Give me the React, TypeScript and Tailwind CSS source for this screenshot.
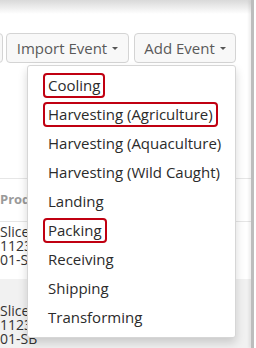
import React from 'react';

const EVENTS = [
  { label: 'Cooling', marked: true },
  { label: 'Harvesting (Agriculture)', marked: true },
  { label: 'Harvesting (Aquaculture)', marked: false },
  { label: 'Harvesting (Wild Caught)', marked: false },
  { label: 'Landing', marked: false },
  { label: 'Packing', marked: true },
  { label: 'Receiving', marked: false },
  { label: 'Shipping', marked: false },
  { label: 'Transforming', marked: false },
];

function Caret() {
  return (
    <span className="inline-block w-0 h-0 ml-[5px] border-x-[3px] border-x-transparent border-t-[3px] border-t-[#555] align-middle" />
  );
}

function ToolButton({ label, width }: { label: string; width: string }) {
  return (
    <div className={`${width} h-[30px] shrink-0 flex items-center justify-center rounded-[4px] border border-[#d4d4d4] bg-[#f8f8f8] text-[15px] text-[#5a5a5a] whitespace-nowrap`}>
      {label}
      <Caret />
    </div>
  );
}

export default function App() {
  return (
    <div
      className="relative w-[256px] h-[348px] overflow-hidden bg-white flex"
      style={{ fontFamily: '"Open Sans", "Noto Sans", sans-serif' }}
    >
      {/* page content */}
      <div className="w-[251px] h-full flex flex-col bg-white">
        <div className="h-[14px] bg-gradient-to-b from-[#d9d9d9] to-white shrink-0" />

        {/* toolbar */}
        <div className="mt-[19px] flex">
          <div className="w-[13px] -ml-[10px] shrink-0 h-[30px] rounded-[4px] border border-[#d4d4d4] bg-[#f8f8f8]" />
          <div className="ml-[3px]">
            <ToolButton label="Import Event" width="w-[123px]" />
          </div>
          <div className="ml-[5px]">
            <ToolButton label="Add Event" width="w-[102px]" />
          </div>
        </div>

        {/* table behind the menu */}
        <div className="mt-[115px] border-t border-[#e6e6e6]" />
        <div className="h-[43px] flex items-center text-[13px] font-bold text-[#9a9a9a] border-b border-[#e6e6e6] whitespace-nowrap">
          Product
        </div>
        <div className="h-[57px] pt-[3px] text-[14px] leading-[14px] text-[#333] whitespace-nowrap">
          <div>Sliced</div>
          <div>1123-</div>
          <div>01-SB</div>
        </div>
        <div className="flex-1 bg-[#f1f1f1] pt-[25px] text-[14px] leading-[14px] text-[#333] whitespace-nowrap">
          <div>Sliced</div>
          <div>1123-</div>
          <div>01-SB</div>
        </div>
      </div>

      {/* window edge */}
      <div className="w-[3px] h-full bg-[#bdbdbd] shadow-[-2px_0_3px_rgba(0,0,0,0.08)]" />
      <div className="flex-1 bg-white" />

      {/* dropdown menu */}
      <div className="absolute left-[27px] top-[65px] w-[209px] py-[5px] bg-white border border-[#d6d6d6] rounded-[3px] shadow-[0_5px_10px_rgba(0,0,0,0.16)]">
        {EVENTS.map((ev) => (
          <div key={ev.label} className="h-[29px] flex items-center pl-[20px] text-[15px] text-[#2b2b2b] whitespace-nowrap">
            {ev.marked ? (
              <span className="-ml-[5px] px-[3px] leading-[21px] border-2 border-[#c00011] rounded-[4px]">
                {ev.label}
              </span>
            ) : (
              ev.label
            )}
          </div>
        ))}
      </div>
    </div>
  );
}
